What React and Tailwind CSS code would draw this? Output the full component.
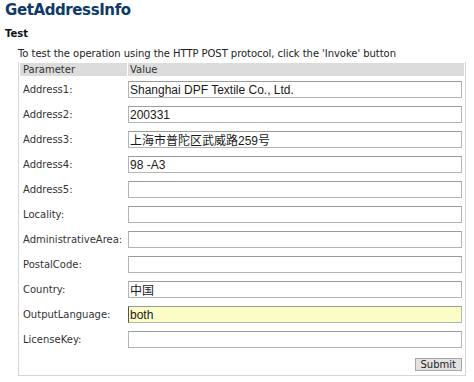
import React from 'react';

const FIELDS = [
  { name: 'Address1', value: 'Shanghai DPF Textile Co., Ltd.' },
  { name: 'Address2', value: '200331' },
  { name: 'Address3', value: '上海市普陀区武威路259号' },
  { name: 'Address4', value: '98 -A3' },
  { name: 'Address5', value: '' },
  { name: 'Locality', value: '' },
  { name: 'AdministrativeArea', value: '' },
  { name: 'PostalCode', value: '' },
  { name: 'Country', value: '中国' },
  { name: 'OutputLanguage', value: 'both', active: true },
  { name: 'LicenseKey', value: '' },
];

const verdana = "font-['DejaVu_Sans',Verdana,sans-serif]";

const App = () => {
  return (
    <div className={`w-[474px] h-[382px] bg-white overflow-hidden ${verdana} text-[#222]`}>
      <h1 className="pl-[5px] h-[20px] leading-[20px] text-[15px] font-bold text-[#0d3a6a] tracking-[-0.4px]">
        GetAddressInfo
      </h1>
      <h2 className="mt-[7px] pl-[5px] h-[14px] leading-[14px] text-[10px] font-bold text-[#111]">Test</h2>

      <div className="mt-[6px] ml-[18px]">
        <p className="h-[14px] leading-[14px] text-[10px] tracking-[-0.05px] text-[#222]">
          To test the operation using the HTTP POST protocol, click the 'Invoke' button
        </p>

        <form className="mt-[1px] w-[448px] border-x border-b border-[#d6d6d6] pt-[1px] pb-[4px]">
          {/* header */}
          <div className="flex gap-[1px] px-[1px] h-[13px] leading-[13px] text-[10px] text-[#333]">
            <div className="w-[107px] bg-[#dcdcdc] pl-[3px]">Parameter</div>
            <div className="flex-1 bg-[#dcdcdc] pl-[2px]">Value</div>
          </div>

          <div className="mt-[1px]">
            {FIELDS.map((f) => (
              <div key={f.name} className="flex items-center h-[25px]">
                <label className="w-[109px] pl-[4px] text-[10px] text-[#333] leading-[12px]">{f.name}:</label>
                <input
                  readOnly
                  defaultValue={f.value}
                  className={`w-[334px] h-[17px] px-[1px] text-[12px] leading-[15px] text-[#1a1a1a] outline-none border border-[#b4b4b4] border-t-[#9a9a9a] font-['Liberation_Sans','Noto_Sans_CJK_SC',Arial,sans-serif] ${
                    f.active ? 'bg-[#fcfcc6] border-l-[#555]' : 'bg-white'
                  }`}
                />
              </div>
            ))}
          </div>

          <div className="flex justify-end pr-[3px] mt-[6px]">
            <button
              type="button"
              className="h-[13px] px-[5px] leading-[11px] text-[10px] text-[#222] bg-[#e2e2e2] border border-[#a8a8a8]"
            >
              Submit
            </button>
          </div>
        </form>
      </div>
    </div>
  );
};

export default App;
